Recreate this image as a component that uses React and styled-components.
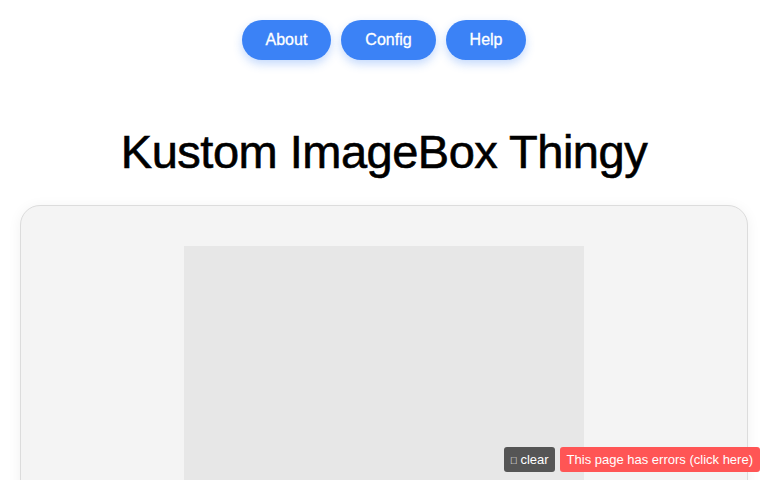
import React from "react";
import styled, { createGlobalStyle } from "styled-components";

const GlobalStyle = createGlobalStyle`
  body {
    margin: 0;
    background: #ffffff;
    font-family: "Liberation Sans", Arial, sans-serif;
  }
`;

const Page = styled.div`
  padding: 20px 20px 0;
`;

const Nav = styled.nav`
  display: flex;
  justify-content: center;
  gap: 10px;
`;

const NavButton = styled.button`
  height: 40px;
  padding: 0 24px;
  border: none;
  border-radius: 20px;
  background: #3b82f6;
  color: #ffffff;
  font-family: "Liberation Sans", Arial, sans-serif;
  font-size: 16px;
  -webkit-text-stroke: 0.3px #ffffff;
  box-shadow: 0 4px 10px rgba(59, 130, 246, 0.3);
  cursor: pointer;
`;

const Title = styled.h1`
  margin: 63px 0 24px;
  text-align: center;
  font-size: 47px;
  font-weight: normal;
  letter-spacing: -0.5px;
  line-height: 58px;
  color: #000000;
  -webkit-text-stroke: 0.6px #000000;
`;

const Frame = styled.section`
  background: #f4f4f4;
  border: 1px solid #dcdcdc;
  border-radius: 20px;
  box-shadow: 0 2px 14px rgba(0, 0, 0, 0.06);
  padding: 40px 0;
  display: flex;
  justify-content: center;
`;

const ImageSlot = styled.div`
  width: 400px;
  height: 400px;
  background: #e7e7e7;
`;

const ErrorBar = styled.div`
  position: fixed;
  right: 8px;
  bottom: 8px;
  display: flex;
  gap: 5px;
`;

const BarButton = styled.button`
  height: 25px;
  padding: 0 ${(props) => (props.danger ? "7px" : "6px")};
  border: none;
  border-radius: 3px;
  background: ${(props) => (props.danger ? "#ff5555" : "#555555")};
  color: #ffffff;
  font-family: "Liberation Sans", Arial, sans-serif;
  font-size: 13px;
  cursor: pointer;
`;

const Glyph = styled.span`
  font-size: 10px;
  margin-right: 3px;
`;

export default function App() {
  return (
    <>
      <GlobalStyle />
      <Page>
        <Nav>
          <NavButton>About</NavButton>
          <NavButton>Config</NavButton>
          <NavButton>Help</NavButton>
        </Nav>
        <Title>Kustom ImageBox Thingy</Title>
        <Frame>
          <ImageSlot />
        </Frame>
      </Page>
      <ErrorBar>
        <BarButton>
          <Glyph>{"\uf1f8"}</Glyph>clear
        </BarButton>
        <BarButton danger>This page has errors (click here)</BarButton>
      </ErrorBar>
    </>
  );
}
